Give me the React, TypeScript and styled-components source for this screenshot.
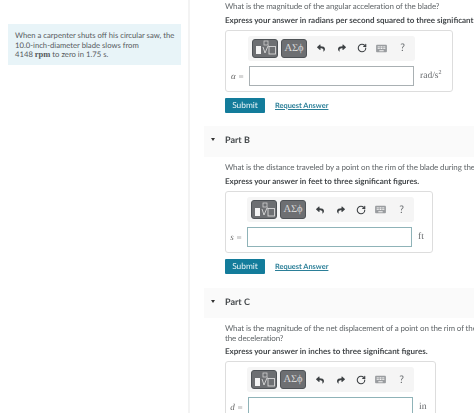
import React from 'react';
import styled, { createGlobalStyle } from 'styled-components';
import { MdKeyboard } from 'react-icons/md';
import { FaReply, FaShare } from 'react-icons/fa';
import { RotateCw } from 'lucide-react';

const GlobalStyle = createGlobalStyle`
  html, body {
    margin: 0;
    padding: 0;
    width: 474px;
    height: 413px;
    overflow: hidden;
    background: #fff;
  }
  body {
    font-family: Lato, 'Liberation Sans', sans-serif;
    color: #5a5f63;
    text-rendering: geometricPrecision;
  }
`;

const Page = styled.div`
  display: flex;
  width: 474px;
  height: 413px;
  overflow: hidden;
  filter: blur(0.35px);
`;

const Sidebar = styled.aside`
  box-sizing: border-box;
  flex: 0 0 190px;
  min-width: 0;
  height: 413px;
  padding: 24px 7px 0 8px;
  border-right: 2px solid #f3f3f3;
`;

const ProblemBox = styled.div`
  box-sizing: border-box;
  height: 41px;
  padding: 7px 7px;
  background: #e8f4f8;
  font-size: 7.7px;
  line-height: 9.5px;
  white-space: nowrap;
  color: #55595c;
`;

const Rpm = styled.span`
  font-family: 'Liberation Serif', serif;
  font-size: 8.5px;
  font-weight: 700;
`;

const Main = styled.main`
  flex: 1;
  min-width: 0;
  overflow: hidden;
  padding-left: 14px;
`;

const PartBand = styled.div<{ $height: number; $mt: number }>`
  box-sizing: border-box;
  display: flex;
  align-items: center;
  gap: 10px;
  height: ${(p) => p.$height}px;
  margin-top: ${(p) => p.$mt}px;
  padding: 0 0 4px 7px;
  background: #fafafa;
  font-size: 9px;
  font-weight: 700;
  color: #45494c;
`;

const Caret = styled.span`
  width: 0;
  height: 0;
  border-left: 2.5px solid transparent;
  border-right: 2.5px solid transparent;
  border-top: 3px solid #333;
`;

const PartBody = styled.div`
  padding-left: 21px;
`;

const Question = styled.div<{ $mt: number }>`
  margin-top: ${(p) => p.$mt}px;
  font-size: 8px;
  letter-spacing: -0.12px;
  line-height: 9.5px;
  white-space: nowrap;
  color: #62676a;
`;

const Instruction = styled.div<{ $mt: number }>`
  margin-top: ${(p) => p.$mt}px;
  font-size: 8px;
  line-height: 10px;
  font-weight: 700;
  white-space: nowrap;
  color: #45494c;
`;

const Card = styled.div<{ $width: number; $mt: number }>`
  box-sizing: border-box;
  width: ${(p) => p.$width}px;
  margin-top: ${(p) => p.$mt}px;
  padding: 5px 0 5px;
  border: 1px solid #dddddd;
  border-radius: 3px;
  background: #fff;
`;

const Toolbar = styled.div<{ $inset: number }>`
  box-sizing: border-box;
  display: flex;
  align-items: center;
  width: 167px;
  height: 25px;
  margin-left: ${(p) => p.$inset}px;
  padding-left: 4px;
  border-radius: 3px;
  background: #f5f5f5;
`;

const DarkButton = styled.div`
  box-sizing: border-box;
  display: flex;
  align-items: center;
  justify-content: center;
  width: 26px;
  height: 19px;
  margin-right: 3px;
  border: 1px solid #4e5256;
  border-radius: 3px;
  background: #6d6f72;
  color: #dcdcdc;
  font-family: 'Liberation Serif', serif;
  font-size: 10.5px;
`;

const ToolIcon = styled.div<{ $width: number }>`
  display: flex;
  align-items: center;
  justify-content: center;
  width: ${(p) => p.$width}px;
  color: #3d4144;
  font-size: 10px;
`;

const Help = styled(ToolIcon)`
  color: #6a6e71;
  font-size: 10.5px;
`;

const AnswerRow = styled.div`
  display: flex;
  align-items: center;
  margin-top: 5px;
`;

const VarLabel = styled.div<{ $width: number }>`
  box-sizing: border-box;
  flex: 0 0 ${(p) => p.$width}px;
  padding-right: 5px;
  text-align: right;
  font-family: 'Liberation Serif', serif;
  font-size: 9px;
  font-style: italic;
  color: #666;
`;

const AnswerInput = styled.div<{ $accent: boolean }>`
  box-sizing: border-box;
  width: 165px;
  height: 20px;
  border: 1px solid ${(p) => (p.$accent ? '#8fb3b8' : '#a9b0b3')};
  background: #fff;
`;

const Unit = styled.div`
  margin-left: 6px;
  font-family: 'Liberation Serif', serif;
  font-size: 9.5px;
  color: #66696c;
  sup {
    font-size: 6px;
    line-height: 0;
  }
`;

const Actions = styled.div`
  display: flex;
  align-items: center;
  margin-top: 6px;
`;

const SubmitButton = styled.div`
  width: 40px;
  height: 15px;
  border-radius: 1px;
  background: #137c9b;
  color: #e6f3f6;
  font-size: 8.4px;
  line-height: 15px;
  text-align: center;
`;

const RequestLink = styled.div`
  margin-left: 10px;
  font-size: 7.4px;
  font-weight: 700;
  color: #2b7f98;
  text-decoration: underline;
`;

function TemplateIcon() {
  return (
    <svg width="23" height="16" viewBox="0 0 23 16">
      <rect x="2" y="6" width="5" height="8" fill="#f4f4f4" />
      <rect x="10" y="1" width="4" height="4" fill="none" stroke="#cfcfcf" strokeWidth="0.8" />
      <path d="M9 7 L11 13 L14 6 L15 6" fill="none" stroke="#d8d8d8" strokeWidth="0.9" />
      <rect x="15" y="6.5" width="6.5" height="7.5" fill="none" stroke="#d8d8d8" strokeWidth="0.9" />
    </svg>
  );
}

function MathToolbar({ inset }: { inset: number }) {
  return (
    <Toolbar $inset={inset}>
      <DarkButton><TemplateIcon /></DarkButton>
      <DarkButton>ΑΣϕ</DarkButton>
      <ToolIcon $width={22}><FaReply size={8} /></ToolIcon>
      <ToolIcon $width={20}><FaShare size={8} /></ToolIcon>
      <ToolIcon $width={19}><RotateCw size={10} strokeWidth={2.6} /></ToolIcon>
      <ToolIcon $width={21}><MdKeyboard size={13} color="#9a9da0" /></ToolIcon>
      <Help $width={21}>?</Help>
    </Toolbar>
  );
}

type AnswerProps = {
  label: string;
  unit: React.ReactNode;
  width: number;
  toolbarInset: number;
  labelWidth: number;
  accent?: boolean;
};

function AnswerBlock({ label, unit, width, toolbarInset, labelWidth, accent = false }: AnswerProps) {
  return (
    <Card $width={width} $mt={5}>
      <MathToolbar inset={toolbarInset} />
      <AnswerRow>
        <VarLabel $width={labelWidth}>{label} =</VarLabel>
        <AnswerInput $accent={accent} />
        <Unit>{unit}</Unit>
      </AnswerRow>
    </Card>
  );
}

function SubmitRow() {
  return (
    <Actions>
      <SubmitButton>Submit</SubmitButton>
      <RequestLink>Request Answer</RequestLink>
    </Actions>
  );
}

export default function App() {
  return (
    <Page>
      <GlobalStyle />
      <Sidebar>
        <ProblemBox>
          When a carpenter shuts off his circular saw, the
          <br />
          10.0-inch-diameter blade slows from
          <br />
          4148 <Rpm>rpm</Rpm> to zero in 1.75 s.
        </ProblemBox>
      </Sidebar>
      <Main>
        <PartBody>
          <Question $mt={2}>What is the magnitude of the angular acceleration of the blade?</Question>
          <Instruction $mt={3}>Express your answer in radians per second squared to three significant figures.</Instruction>
          <AnswerBlock
            label="α"
            width={228}
            toolbarInset={22}
            labelWidth={23}
            unit={<>rad/s<sup>2</sup></>}
          />
          <SubmitRow />
        </PartBody>

        <PartBand $height={31} $mt={13}>
          <Caret />
          Part B
        </PartBand>
        <PartBody>
          <Question $mt={6}>What is the distance traveled by a point on the rim of the blade during the deceleration?</Question>
          <Instruction $mt={4}>Express your answer in feet to three significant figures.</Instruction>
          <AnswerBlock label="s" width={208} toolbarInset={21} labelWidth={21} unit="ft" accent />
          <SubmitRow />
        </PartBody>

        <PartBand $height={30} $mt={14}>
          <Caret />
          Part C
        </PartBand>
        <PartBody>
          <Question $mt={6}>
            What is the magnitude of the net displacement of a point on the rim of the blade during
            <br />
            the deceleration?
          </Question>
          <Instruction $mt={3}>Express your answer in inches to three significant figures.</Instruction>
          <AnswerBlock label="d" width={211} toolbarInset={21} labelWidth={22} unit="in" accent />
        </PartBody>
      </Main>
    </Page>
  );
}
